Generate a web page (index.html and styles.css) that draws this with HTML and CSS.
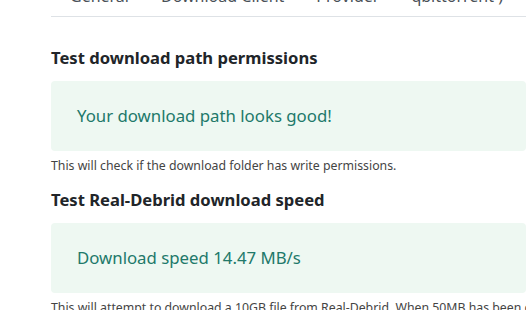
FILE: index.html
```html
<!DOCTYPE html>
<html lang="en">
<head>
  <meta charset="UTF-8" />
  <meta name="viewport" content="width=device-width, initial-scale=1.0"/>
  <title>Settings - Tests</title>
  <link rel="stylesheet" href="styles.css">
</head>
<body>
  <div class="page">
    <ul class="nav-tabs">
      <li class="nav-link">General</li>
      <li class="nav-link">Download Client</li>
      <li class="nav-link">Provider</li>
      <li class="nav-link">qbittorrent )</li>
    </ul>

    <div class="tab-content">
      <div class="test-block">
        <h5>Test download path permissions</h5>
        <div class="alert">Your download path looks good!</div>
        <small class="help">This will check if the download folder has write permissions.</small>
      </div>

      <div class="test-block">
        <h5>Test Real-Debrid download speed</h5>
        <div class="alert">Download speed 14.47 MB/s</div>
        <small class="help">This will attempt to download a 10GB file from Real-Debrid. When 50MB has been downloaded the test will stop.</small>
      </div>
    </div>
  </div>
</body>
</html>
```

FILE: styles.css
```css
body {
  margin: 0;
  font-family: 'Noto Sans', 'Open Sans', sans-serif;
  color: #212529;
  background: #fff;
  overflow: hidden;
}

.page {
  margin-top: -24px;
  padding-left: 51px;
}

.nav-tabs {
  display: flex;
  margin: 0;
  padding: 0 0 0 3px;
  list-style: none;
  border-bottom: 1px solid #dee2e6;
  white-space: nowrap;
}

.nav-link {
  padding: 8px 16px;
  font-size: 16px;
  line-height: 24px;
  color: #495057;
}

.tab-content {
  padding-top: 30px;
}

.test-block {
  margin-bottom: 14px;
}

h5 {
  margin: 0 0 12px 0;
  font-size: 16.6px;
  font-weight: 700;
  line-height: 22px;
  color: #212529;
}

.alert {
  padding: 21px 26px;
  font-size: 16.8px;
  line-height: 28px;
  color: #21796a;
  background: #eef8f2;
  border-radius: 4px;
  white-space: nowrap;
}

.help {
  display: block;
  margin-top: 6px;
  font-size: 12.3px;
  line-height: 18px;
  color: #444;
  white-space: nowrap;
}
```
